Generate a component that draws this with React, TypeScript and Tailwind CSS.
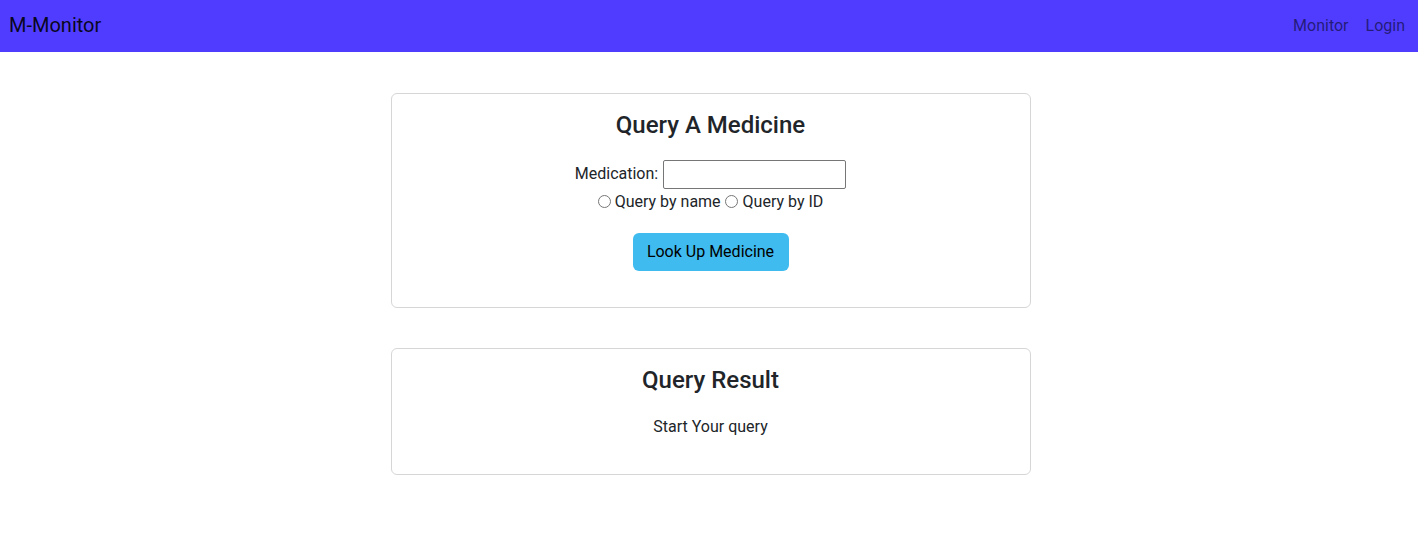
import React from "react";

export default function App() {
  return (
    <div className="min-h-screen bg-white text-[#212529]" style={{ fontFamily: "Roboto, 'Liberation Sans', sans-serif" }}>
      <nav className="h-[52px] bg-[#4f3cff] flex items-center justify-between pl-[9px] pr-[13px]">
        <a href="#" className="text-[20px] text-black/90 leading-none -mt-[2px]">M-Monitor</a>
        <div className="flex items-center gap-[17px] text-[16px] text-black/55 -mt-[1px]">
          <a href="#">Monitor</a>
          <a href="#">Login</a>
        </div>
      </nav>

      <main className="flex flex-col items-center pt-[41px] gap-[40px] pl-[3px]">
        <section className="w-[640px] h-[215px] border border-[#d6d6d6] rounded-[6px] flex flex-col items-center pt-[17px]">
          <h4 className="text-[24px] font-medium leading-[1.2]">Query A Medicine</h4>
          <form className="flex flex-col items-center mt-[20px] text-[16px]" onSubmit={(e) => e.preventDefault()}>
            <div className="flex items-center gap-[5px]">
              <label htmlFor="med">Medication:</label>
              <input id="med" type="text" className="w-[183px] h-[29px] border border-[#767676] rounded-[2px] px-1" />
            </div>
            <div className="flex items-center h-[24px] mt-[1px]">
              <input type="radio" name="q" className="w-[13px] h-[13px] mr-[4px]" />
              <span>Query by name</span>
              <input type="radio" name="q" className="w-[13px] h-[13px] ml-[4px] mr-[5px]" />
              <span>Query by ID</span>
            </div>
            <button type="submit" className="mt-[19px] w-[156px] h-[38px] rounded-[6px] bg-[#3fbbef] text-black text-[16px]">
              Look Up Medicine
            </button>
          </form>
        </section>

        <section className="w-[640px] h-[127px] border border-[#d6d6d6] rounded-[6px] flex flex-col items-center pt-[17px]">
          <h4 className="text-[24px] font-medium leading-[1.2]">Query Result</h4>
          <p className="mt-[20px] text-[16px]">Start Your query</p>
        </section>
      </main>
    </div>
  );
}
